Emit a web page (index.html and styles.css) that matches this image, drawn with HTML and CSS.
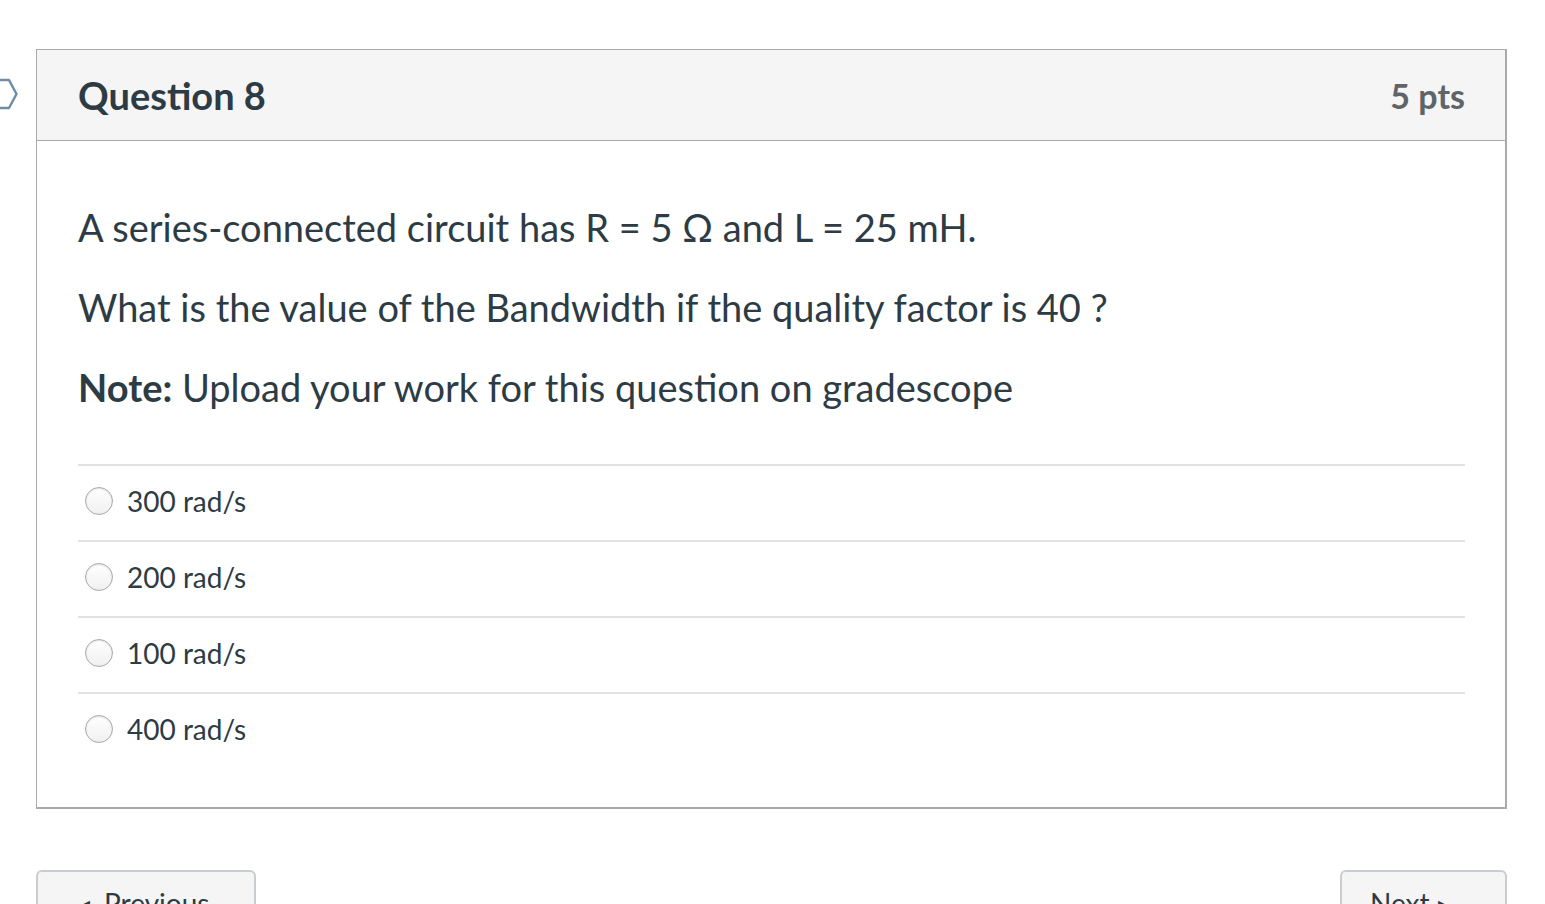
FILE: index.html
```html
<!DOCTYPE html>
<html>
<head>
<meta charset="utf-8">
<link rel="stylesheet" href="styles.css">
</head>
<body>
<div class="page">
  <svg class="flag" width="22" height="34" viewBox="0 0 22 34">
    <path d="M-6 2 H9 L16.5 16 L9 30 H-6" fill="none" stroke="#6e8ea6" stroke-width="2.5" stroke-linejoin="round"/>
  </svg>
  <div class="question">
    <div class="q-header">
      <span class="q-title">Question 8</span>
      <span class="q-pts">5 pts</span>
    </div>
    <div class="q-body">
      <p>A series-connected circuit has R = 5 Ω and L = 25 mH.</p>
      <p>What is the value of the Bandwidth if the quality factor is 40 ?</p>
      <p><strong>Note:</strong> Upload your work for this question on gradescope</p>
      <div class="answers">
        <label class="answer"><span class="radio"></span><span>300 rad/s</span></label>
        <label class="answer"><span class="radio"></span><span>200 rad/s</span></label>
        <label class="answer"><span class="radio"></span><span>100 rad/s</span></label>
        <label class="answer"><span class="radio"></span><span>400 rad/s</span></label>
      </div>
    </div>
  </div>
  <div class="nav">
    <button class="btn prev"><span class="arr">◂</span> Previous</button>
    <button class="btn next">Next <span class="arr">▸</span></button>
  </div>
</div>
</body>
</html>
```
FILE: styles.css
```css
html, body {
  margin: 0;
  padding: 0;
  background: #fff;
}
body {
  font-family: Lato, "Noto Sans", sans-serif;
  color: #2d3b45;
  overflow: hidden;
  height: 904px;
}
.page {
  position: relative;
  padding: 49px 38px 0 36px;
}
.flag {
  position: absolute;
  left: 0;
  top: 78px;
}
.question {
  border: 1px solid #aaaaaa;
  border-bottom-width: 2px;
  border-right-width: 2px;
}
.q-header {
  height: 90px;
  background: #f5f5f5;
  border-bottom: 1px solid #aaaaaa;
  display: flex;
  align-items: center;
  justify-content: space-between;
  padding: 0 40px 0 41px;
}
.q-title {
  font-size: 38px;
  font-weight: 700;
  color: #2d3b45;
}
.q-pts {
  font-size: 34px;
  font-weight: 700;
  color: #5f6468;
  margin-top: 0;
}
.q-body {
  padding: 61px 40px 39px 41px;
}
.q-body p {
  margin: 0 0 30px 0;
  font-size: 38px;
  line-height: 50px;
}
.q-body p:last-of-type {
  margin-bottom: 0;
}
.q-body strong {
  font-weight: 700;
}
.answers {
  margin-top: 52px;
}
.answer {
  display: flex;
  align-items: center;
  height: 70px;
  padding-bottom: 4px;
  border-top: 2px solid #e2e2e2;
  font-size: 28px;
}
.radio {
  width: 26px;
  height: 26px;
  border-radius: 50%;
  border: 1px solid #a9a9a9;
  background: linear-gradient(#ffffff, #f0f0f0);
  box-shadow: inset 0 1px 2px rgba(0,0,0,0.12);
  margin: 0 14px 0 7px;
  flex: none;
}
.nav {
  display: flex;
  justify-content: space-between;
  margin-top: 61px;
}
.btn {
  font-family: Lato, "Noto Sans", sans-serif;
  font-size: 28px;
  color: #2d3b45;
  background: #f5f5f5;
  border: 2px solid #c7cdd1;
  border-radius: 6px;
  height: 60px;
  padding: 16px 28px 0;
  line-height: 30px;
  display: flex;
  align-items: flex-start;
}
.prev { width: 220px; padding-left: 34px; }
.next { width: 167px; padding-left: 28px; }
.arr { font-size: 20px; margin: 0 8px; }
.prev .arr { margin-right: 14px; }
```
